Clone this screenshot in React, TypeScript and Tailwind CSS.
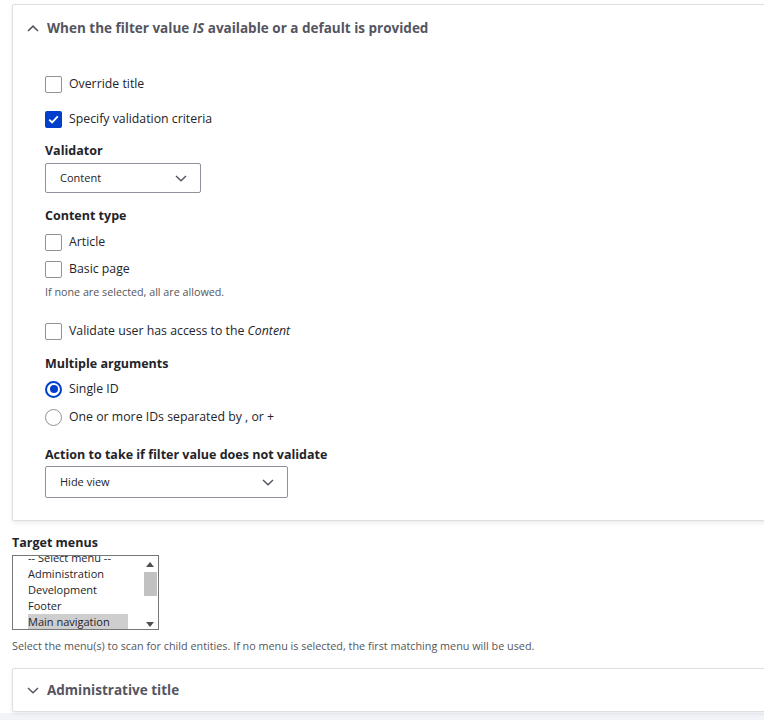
import React from "react";

const F = { fontFamily: '"Open Sans", "Noto Sans", sans-serif' };

function Checkbox({ checked = false }: { checked?: boolean }) {
  return checked ? (
    <span className="flex h-[17px] w-[17px] shrink-0 items-center justify-center rounded-[2px] bg-[#003ecc]">
      <svg width="11" height="9" viewBox="0 0 11 9" fill="none">
        <path d="M1.2 4.6 L4.1 7.4 L9.8 1.4" stroke="#fff" strokeWidth="1.9" />
      </svg>
    </span>
  ) : (
    <span className="block h-[17px] w-[17px] shrink-0 rounded-[2px] border border-[#919297] bg-white" />
  );
}

function Radio({ checked = false }: { checked?: boolean }) {
  return checked ? (
    <span className="flex h-[17px] w-[17px] shrink-0 items-center justify-center rounded-full border-[2.5px] border-[#003ecc] bg-white">
      <span className="block h-[8px] w-[8px] rounded-full bg-[#003ecc]" />
    </span>
  ) : (
    <span className="block h-[17px] w-[17px] shrink-0 rounded-full border border-[#919297] bg-white" />
  );
}

function ChevronDown({ color = "#545560" }: { color?: string }) {
  return (
    <svg width="12" height="7" viewBox="0 0 12 7" fill="none">
      <path d="M1 1 L6 5.8 L11 1" stroke={color} strokeWidth="1.4" />
    </svg>
  );
}

function Select({ value, width, height }: { value: string; width: string; height: string }) {
  return (
    <div
      className={`flex items-center justify-between rounded-[2px] border border-[#8e929c] bg-white pl-[14px] pr-[13px] text-[11px] text-[#232429] ${width} ${height}`}
    >
      <span>{value}</span>
      <ChevronDown color="#545560" />
    </div>
  );
}

function Row({ children }: { children: React.ReactNode }) {
  return <div className="flex h-[24px] items-center gap-[7px] text-[12.3px] text-[#232429]">{children}</div>;
}

function Label({ children }: { children: React.ReactNode }) {
  return <div className="h-[20px] text-[12.5px] font-bold leading-[20px] text-[#232429]">{children}</div>;
}

export default function App() {
  return (
    <div className="min-h-[720px] w-[764px] overflow-hidden bg-[#f3f4f9]" style={F}>
      <div className="bg-white pb-[1px] pl-[12px] pt-[4px]">
        {/* Panel 1 */}
        <div className="w-[790px] rounded-[2px] border border-[#dedfe4] bg-white shadow-[0_2px_4px_rgba(0,0,0,0.08)]">
          <div className="flex h-[46px] items-center pl-[14px]">
            <svg width="12" height="7" viewBox="0 0 12 7" fill="none">
              <path d="M1 6 L6 1.2 L11 6" stroke="#545560" strokeWidth="1.6" />
            </svg>
            <span className="ml-[8px] text-[13.5px] font-bold text-[#545560]">
              When the filter value <i>IS</i> available or a default is provided
            </span>
          </div>
          <div className="pb-[22px] pl-[32px]">
            <div className="mt-[21px]">
              <Row>
                <Checkbox />
                <span>Override title</span>
              </Row>
            </div>
            <div className="mt-[11px]">
              <Row>
                <Checkbox checked />
                <span>Specify validation criteria</span>
              </Row>
            </div>
            <div className="mt-[10px]">
              <Label>Validator</Label>
            </div>
            <div className="mt-[2px]">
              <Select value="Content" width="w-[156px]" height="h-[30px]" />
            </div>
            <div className="mt-[13px]">
              <Label>Content type</Label>
            </div>
            <div className="mt-[4px]">
              <Row>
                <Checkbox />
                <span>Article</span>
              </Row>
            </div>
            <div className="mt-[3px]">
              <Row>
                <Checkbox />
                <span>Basic page</span>
              </Row>
            </div>
            <div className="mt-[3px] h-[16px] text-[10.75px] leading-[16px] text-[#55565b]">
              If none are selected, all are allowed.
            </div>
            <div className="mt-[19px]">
              <Row>
                <Checkbox />
                <span>
                  Validate user has access to the <i>Content</i>
                </span>
              </Row>
            </div>
            <div className="mt-[11px]">
              <Label>Multiple arguments</Label>
            </div>
            <div className="mt-[3px]">
              <Row>
                <Radio checked />
                <span>Single ID</span>
              </Row>
            </div>
            <div className="mt-[4px]">
              <Row>
                <Radio />
                <span>One or more IDs separated by , or +</span>
              </Row>
            </div>
            <div className="mt-[16px]">
              <Label>Action to take if filter value does not validate</Label>
            </div>
            <div className="mt-[1px]">
              <Select value="Hide view" width="w-[243px]" height="h-[32px]" />
            </div>
          </div>
        </div>

        {/* Target menus */}
        <div className="mt-[12px]">
          <Label>Target menus</Label>
        </div>
        <div className="mt-[2px] flex h-[75px] w-[147px] overflow-hidden border border-[#767676] bg-white">
          <div className="flex-1 overflow-hidden pl-[15px]">
            <div className="-mt-[6px] text-[11px] leading-[16px] text-[#232429]">
              <div className="h-[16px]">-- Select menu --</div>
              <div className="h-[16px]">Administration</div>
              <div className="h-[16px]">Development</div>
              <div className="h-[16px]">Footer</div>
              <div className="h-[16px] w-[100px] bg-[#cecece]">Main navigation</div>
            </div>
          </div>
          <div className="flex w-[16px] flex-col items-center bg-white pb-[2px] pt-[6px]">
            <svg width="8" height="5" viewBox="0 0 8 5">
              <path d="M0 5 L4 0 L8 5 Z" fill="#505050" />
            </svg>
            <div className="mt-[5px] h-[24px] w-[13px] bg-[#c1c1c1]" />
            <div className="flex-1" />
            <svg width="8" height="5" viewBox="0 0 8 5">
              <path d="M0 0 L4 5 L8 0 Z" fill="#505050" />
            </svg>
          </div>
        </div>
        <div className="mt-[8px] h-[16px] text-[10.8px] leading-[16px] text-[#55565b]">
          Select the menu(s) to scan for child entities. If no menu is selected, the first matching menu will be used.
        </div>

        {/* Panel 2 */}
        <div className="mt-[14px] w-[790px] rounded-[2px] border border-[#dedfe4] bg-white shadow-[0_2px_4px_rgba(0,0,0,0.08)]">
          <div className="flex h-[42px] items-center pl-[14px]">
            <ChevronDown />
            <span className="ml-[8px] text-[13.5px] font-bold text-[#545560]">Administrative title</span>
          </div>
        </div>
      </div>
    </div>
  );
}
